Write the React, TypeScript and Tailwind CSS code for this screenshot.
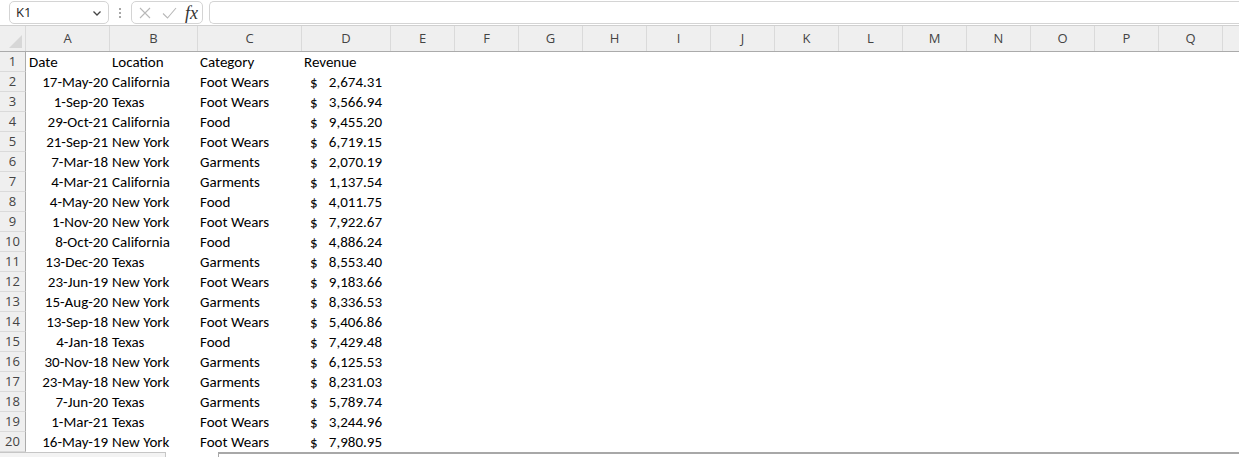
import React from "react";

const rows: [string, string, string, string][] = [
  ["17-May-20", "California", "Foot Wears", "2,674.31"],
  ["1-Sep-20", "Texas", "Foot Wears", "3,566.94"],
  ["29-Oct-21", "California", "Food", "9,455.20"],
  ["21-Sep-21", "New York", "Foot Wears", "6,719.15"],
  ["7-Mar-18", "New York", "Garments", "2,070.19"],
  ["4-Mar-21", "California", "Garments", "1,137.54"],
  ["4-May-20", "New York", "Food", "4,011.75"],
  ["1-Nov-20", "New York", "Foot Wears", "7,922.67"],
  ["8-Oct-20", "California", "Food", "4,886.24"],
  ["13-Dec-20", "Texas", "Garments", "8,553.40"],
  ["23-Jun-19", "New York", "Foot Wears", "9,183.66"],
  ["15-Aug-20", "New York", "Garments", "8,336.53"],
  ["13-Sep-18", "New York", "Foot Wears", "5,406.86"],
  ["4-Jan-18", "Texas", "Food", "7,429.48"],
  ["30-Nov-18", "New York", "Garments", "6,125.53"],
  ["23-May-18", "New York", "Garments", "8,231.03"],
  ["7-Jun-20", "Texas", "Garments", "5,789.74"],
  ["1-Mar-21", "Texas", "Foot Wears", "3,244.96"],
  ["16-May-19", "New York", "Foot Wears", "7,980.95"],
];

const extraCols = ["E", "F", "G", "H", "I", "J", "K", "L", "M", "N", "O", "P", "Q"];

const cellFont = { fontFamily: "Carlito, Lato, 'Liberation Sans', sans-serif" };

export default function App() {
  return (
    <div className="w-[1239px] h-[457px] overflow-hidden bg-white relative" style={{ fontFamily: "'Open Sans', 'Noto Sans', sans-serif" }}>
      {/* Formula bar */}
      <div className="h-[25px] flex items-start pt-[1px]">
        <div className="ml-[9px] w-[100px] h-[23px] border border-[#d4d4d4] rounded-[5px] flex items-center justify-between pl-[6px] pr-[5px] text-[13px] text-[#222]">
          <span>K1</span>
          <svg width="12" height="12" viewBox="0 0 12 12" fill="none" stroke="#444" strokeWidth="1.3">
            <path d="M2.5 4.5 L6 8 L9.5 4.5" />
          </svg>
        </div>
        <div className="w-[22px] h-[23px] flex items-center justify-center">
          <svg width="4" height="12" viewBox="0 0 4 12" fill="#8a8a8a">
            <circle cx="2" cy="2" r="1" />
            <circle cx="2" cy="6" r="1" />
            <circle cx="2" cy="10" r="1" />
          </svg>
        </div>
        <div className="w-[72px] h-[23px] border border-[#d4d4d4] rounded-[5px] flex items-center pl-[5px]">
          <svg width="16" height="16" viewBox="0 0 16 16" fill="none" stroke="#b8b8b8" strokeWidth="1.1">
            <path d="M3 3 L13 13 M13 3 L3 13" />
          </svg>
          <svg className="ml-[8px]" width="17" height="16" viewBox="0 0 17 16" fill="none" stroke="#b8b8b8" strokeWidth="1.1">
            <path d="M2 8.5 L6.5 13 L15 3" />
          </svg>
          <span className="ml-[7px] text-[18px] leading-none text-[#333] italic" style={{ fontFamily: "'Liberation Serif', serif" }}>
            fx
          </span>
        </div>
        <div className="ml-[6px] flex-1 h-[23px] border border-r-0 border-[#d4d4d4] rounded-l-[5px]" />
      </div>

      {/* Column header */}
      <div className="flex h-[27px] border-t border-[#d0d0d0] border-b border-b-[#ababab] bg-[#efefef] text-[13px] text-[#444]">
        <div className="w-[26px] shrink-0 relative border-r border-[#dadada]">
          <svg className="absolute right-[3px] bottom-[3px]" width="13" height="13" viewBox="0 0 13 13">
            <path d="M13 0 L13 13 L0 13 Z" fill="#d7d7d7" />
          </svg>
        </div>
        {[
          ["A", 84],
          ["B", 88],
          ["C", 104],
          ["D", 89],
        ].map(([c, w]) => (
          <div key={c as string} className="shrink-0 flex items-center justify-center border-r border-[#dadada]" style={{ width: w as number }}>
            {c}
          </div>
        ))}
        {extraCols.map((c) => (
          <div key={c} className="w-[64px] shrink-0 flex items-center justify-center border-r border-[#dadada]">
            {c}
          </div>
        ))}
        <div className="flex-1" />
      </div>

      {/* Rows */}
      <div className="text-[15px] text-black" style={cellFont}>
        <Row n={1}>
          <div className="w-[84px] shrink-0 pl-[3px]">Date</div>
          <div className="w-[88px] shrink-0 pl-[2px]">Location</div>
          <div className="w-[104px] shrink-0 pl-[2px]">Category</div>
          <div className="w-[89px] shrink-0 pl-[2px]">Revenue</div>
        </Row>
        {rows.map((r, i) => (
          <Row key={i} n={i + 2}>
            <div className="w-[84px] shrink-0 text-right pr-[2px]">{r[0]}</div>
            <div className="w-[88px] shrink-0 pl-[2px]">{r[1]}</div>
            <div className="w-[104px] shrink-0 pl-[2px]">{r[2]}</div>
            <div className="w-[89px] shrink-0 flex justify-between pl-[8px] pr-[9px]">
              <span>$</span>
              <span>{r[3]}</span>
            </div>
          </Row>
        ))}
      </div>

      {/* Bottom strip */}
      <div className="absolute left-0 right-0 top-[452px] h-[5px] flex">
        <div className="w-[166px] h-full border-t border-r border-[#c6c6c6] bg-[#f3f3f3]" />
        <div className="w-[52px]" />
        <div className="flex-1 h-full border-t-2 border-l border-[#a8a8a8] bg-white" />
      </div>
    </div>
  );
}

function Row({ n, children }: { n: number; children: React.ReactNode }) {
  return (
    <div className="flex h-[20px] items-center">
      <div
        className="w-[26px] shrink-0 h-full flex items-center justify-center bg-[#efefef] border-r border-[#ababab] border-b border-b-[#dadada] text-[13px] text-[#444]"
        style={{ fontFamily: "'Open Sans', 'Noto Sans', sans-serif" }}
      >
        {n}
      </div>
      {children}
    </div>
  );
}
